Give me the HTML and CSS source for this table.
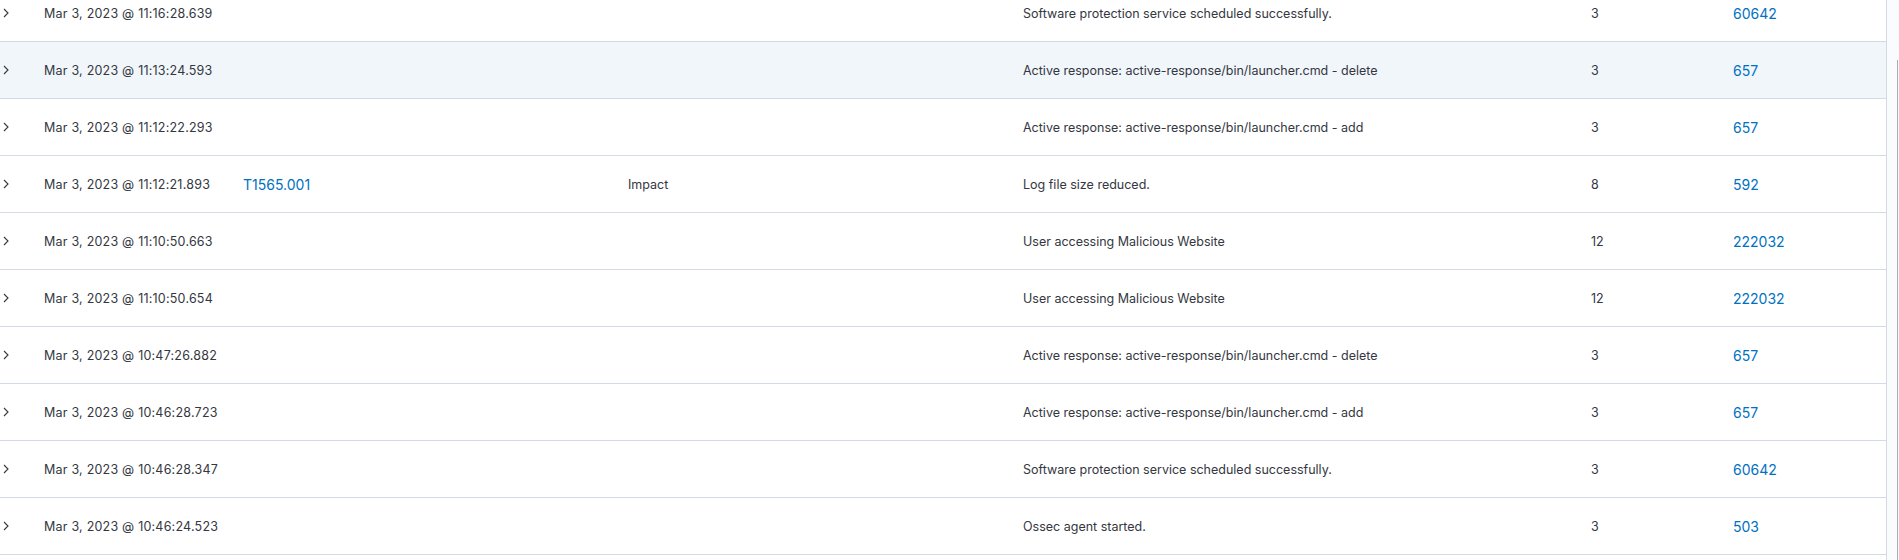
FILE: index.html
```html
<!DOCTYPE html>
<html>
<head>
<meta charset="utf-8">
<link rel="stylesheet" href="styles.css">
</head>
<body>
<div class="page">
  <div class="table">
    <div class="row">
      <div class="cell chev"><svg width="8" height="10" viewBox="0 0 8 10"><polyline points="2,1 6,5 2,9" fill="none" stroke="#343741" stroke-width="1.1"/></svg></div>
      <div class="cell ts">Mar 3, 2023 @ 11:16:28.639</div><div class="cell"></div><div class="cell"></div>
      <div class="cell">Software protection service scheduled successfully.</div>
      <div class="cell">3</div><div class="cell link">60642</div>
    </div>
    <div class="row hl">
      <div class="cell chev"><svg width="8" height="10" viewBox="0 0 8 10"><polyline points="2,1 6,5 2,9" fill="none" stroke="#343741" stroke-width="1.1"/></svg></div>
      <div class="cell ts">Mar 3, 2023 @ 11:13:24.593</div><div class="cell"></div><div class="cell"></div>
      <div class="cell">Active response: active-response/bin/launcher.cmd - delete</div>
      <div class="cell">3</div><div class="cell link">657</div>
    </div>
    <div class="row">
      <div class="cell chev"><svg width="8" height="10" viewBox="0 0 8 10"><polyline points="2,1 6,5 2,9" fill="none" stroke="#343741" stroke-width="1.1"/></svg></div>
      <div class="cell ts">Mar 3, 2023 @ 11:12:22.293</div><div class="cell"></div><div class="cell"></div>
      <div class="cell">Active response: active-response/bin/launcher.cmd - add</div>
      <div class="cell">3</div><div class="cell link">657</div>
    </div>
    <div class="row">
      <div class="cell chev"><svg width="8" height="10" viewBox="0 0 8 10"><polyline points="2,1 6,5 2,9" fill="none" stroke="#343741" stroke-width="1.1"/></svg></div>
      <div class="cell ts">Mar 3, 2023 @ 11:12:21.893</div><div class="cell link">T1565.001</div><div class="cell">Impact</div>
      <div class="cell">Log file size reduced.</div>
      <div class="cell">8</div><div class="cell link">592</div>
    </div>
    <div class="row">
      <div class="cell chev"><svg width="8" height="10" viewBox="0 0 8 10"><polyline points="2,1 6,5 2,9" fill="none" stroke="#343741" stroke-width="1.1"/></svg></div>
      <div class="cell ts">Mar 3, 2023 @ 11:10:50.663</div><div class="cell"></div><div class="cell"></div>
      <div class="cell">User accessing Malicious Website</div>
      <div class="cell">12</div><div class="cell link">222032</div>
    </div>
    <div class="row">
      <div class="cell chev"><svg width="8" height="10" viewBox="0 0 8 10"><polyline points="2,1 6,5 2,9" fill="none" stroke="#343741" stroke-width="1.1"/></svg></div>
      <div class="cell ts">Mar 3, 2023 @ 11:10:50.654</div><div class="cell"></div><div class="cell"></div>
      <div class="cell">User accessing Malicious Website</div>
      <div class="cell">12</div><div class="cell link">222032</div>
    </div>
    <div class="row">
      <div class="cell chev"><svg width="8" height="10" viewBox="0 0 8 10"><polyline points="2,1 6,5 2,9" fill="none" stroke="#343741" stroke-width="1.1"/></svg></div>
      <div class="cell ts">Mar 3, 2023 @ 10:47:26.882</div><div class="cell"></div><div class="cell"></div>
      <div class="cell">Active response: active-response/bin/launcher.cmd - delete</div>
      <div class="cell">3</div><div class="cell link">657</div>
    </div>
    <div class="row">
      <div class="cell chev"><svg width="8" height="10" viewBox="0 0 8 10"><polyline points="2,1 6,5 2,9" fill="none" stroke="#343741" stroke-width="1.1"/></svg></div>
      <div class="cell ts">Mar 3, 2023 @ 10:46:28.723</div><div class="cell"></div><div class="cell"></div>
      <div class="cell">Active response: active-response/bin/launcher.cmd - add</div>
      <div class="cell">3</div><div class="cell link">657</div>
    </div>
    <div class="row">
      <div class="cell chev"><svg width="8" height="10" viewBox="0 0 8 10"><polyline points="2,1 6,5 2,9" fill="none" stroke="#343741" stroke-width="1.1"/></svg></div>
      <div class="cell ts">Mar 3, 2023 @ 10:46:28.347</div><div class="cell"></div><div class="cell"></div>
      <div class="cell">Software protection service scheduled successfully.</div>
      <div class="cell">3</div><div class="cell link">60642</div>
    </div>
    <div class="row">
      <div class="cell chev"><svg width="8" height="10" viewBox="0 0 8 10"><polyline points="2,1 6,5 2,9" fill="none" stroke="#343741" stroke-width="1.1"/></svg></div>
      <div class="cell ts">Mar 3, 2023 @ 10:46:24.523</div><div class="cell"></div><div class="cell"></div>
      <div class="cell">Ossec agent started.</div>
      <div class="cell">3</div><div class="cell link">503</div>
    </div>
  </div>
  <div class="gutter"><div class="thumb"></div></div>
</div>
</body>
</html>
```

FILE: styles.css
```css
html, body {
  margin: 0;
  padding: 0;
  background: #ffffff;
  overflow: hidden;
}
body {
  font-family: Inter, "Liberation Sans", sans-serif;
  color: #343741;
  font-size: 12.5px;
}
.page {
  display: flex;
  height: 560px;
}
.table {
  width: 1886px;
  border-right: 1px solid #d3dae6;
  margin-top: -15px;
}
.row {
  display: grid;
  grid-template-columns: 44px 199px 385px 395px 568px 142px 153px;
  height: 56px;
  border-bottom: 1px solid #d3dae6;
  align-items: center;
}
.row.hl {
  background: #f1f6fb;
}
.cell {
  white-space: nowrap;
}
.ts {
  letter-spacing: 0.22px;
}
.chev {
  display: flex;
  align-items: center;
  padding-left: 2px;
}
.chev svg {
  display: block;
}
.link {
  color: #0071c2;
  font-size: 14px;
}
.gutter {
  flex: 1;
  background: #fafbfd;
  display: flex;
  justify-content: flex-end;
  padding-top: 60px;
  padding-right: 1px;
}
.thumb {
  width: 1px;
  background: #a9adb6;
}
```
